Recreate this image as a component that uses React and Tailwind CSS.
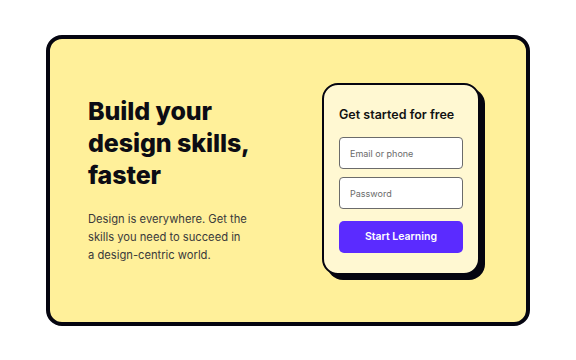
import React from 'react';

export default function App() {
  return (
    <div className="w-[576px] h-[360px] bg-white flex items-center justify-center" style={{ fontFamily: 'Inter, "Noto Sans", sans-serif' }}>
      <div className="w-[484px] h-[291px] mt-[1px] rounded-[16px] border-4 border-[#050510] bg-[#fff09a] flex items-center justify-between pl-[38px] pr-[46px]">
        <div className="flex flex-col mb-[3px]">
          <h1 className="text-[25px] leading-[32px] font-extrabold tracking-[-0.1px] text-[#0c0c14]">
            Build your<br />design skills,<br />faster
          </h1>
          <p className="mt-[19px] text-[11.2px] leading-[18px] text-[#3a3a3a] whitespace-nowrap">
            Design is everywhere. Get the<br />skills you need to succeed in<br />a design-centric world.
          </p>
        </div>
        <div className="w-[158px] h-[192px] mb-[3px] rounded-[16px] border-2 border-[#050510] bg-[#fff8d2] shadow-[5px_5px_0_0_#050510] px-[15px] pt-[22px] flex flex-col">
          <h2 className="text-[12.5px] font-semibold text-[#111] leading-[16px]">Get started for free</h2>
          <input className="mt-[14px] h-[32px] w-full rounded-[4px] border border-[#6b6b6b] bg-white px-[10px] text-[9px] outline-none placeholder:text-[#6b6b6b]" placeholder="Email or phone" />
          <input className="mt-[8px] h-[32px] w-full rounded-[4px] border border-[#6b6b6b] bg-white px-[10px] text-[9px] outline-none placeholder:text-[#6b6b6b]" placeholder="Password" />
          <button className="mt-[12px] h-[32px] w-full rounded-[5px] bg-[#5b2bff] text-white text-[10.5px] font-semibold">Start Learning</button>
        </div>
      </div>
    </div>
  );
}
